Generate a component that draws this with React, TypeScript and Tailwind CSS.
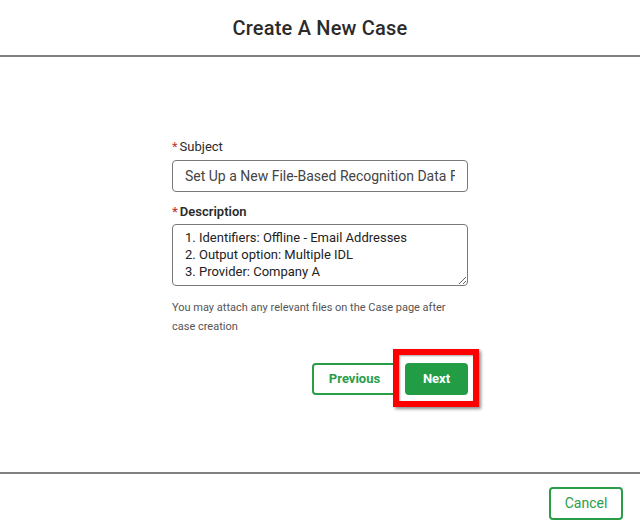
export default function App() {
  return (
    <div className="w-[640px] h-[532px] bg-white flex flex-col font-['Roboto',sans-serif] text-[#2b2b2b]">
      {/* Header */}
      <div className="h-[57px] flex items-center justify-center border-b-2 border-[#808080]">
        <h1 className="text-[20px] font-medium tracking-[0.2px]">Create A New Case</h1>
      </div>

      {/* Body */}
      <div className="flex-1 flex justify-center pt-[82px]">
        <div className="w-[296px] flex flex-col">
          <label className="text-[13px] leading-[16px] mb-[5px] flex">
            <span className="text-[#c23934] mr-[2px]">*</span>Subject
          </label>
          <input
            readOnly
            value="Set Up a New File-Based Recognition Data Feed"
            className="h-[32px] border border-[#7a7a7a] rounded-[4px] px-[12px] text-[14px] text-[#444] outline-none"
          />
          <label className="text-[13px] leading-[16px] font-semibold mt-[12px] mb-[4px] flex">
            <span className="text-[#c23934] mr-[2px]">*</span>Description
          </label>
          <textarea
            readOnly
            value={"1. Identifiers: Offline - Email Addresses\n2. Output option: Multiple IDL\n3. Provider: Company A"}
            className="h-[62px] border border-[#7a7a7a] rounded-[4px] px-[12px] pt-[4px] text-[13px] leading-[17px] text-[#222] outline-none resize-y"
          />
          <p className="mt-[12px] text-[11px] leading-[19px] text-[#555]">
            You may attach any relevant files on the Case page after case creation
          </p>
          <div className="mt-[27px] flex justify-end gap-[8px]">
            <button className="w-[85px] h-[32px] border-2 border-[#2a9d48] rounded-[4px] text-[#2a9d48] text-[13px] font-bold">
              Previous
            </button>
            <div className="relative">
              <button className="w-[63px] h-[32px] bg-[#229c45] rounded-[4px] text-white text-[13px] font-bold">
                Next
              </button>
              <div className="absolute left-[-12px] top-[-14px] right-[-11px] bottom-[-12px] border-[6px] border-[#ff0000] shadow-[2px_2px_3px_rgba(0,0,0,0.45),inset_1px_1px_2px_rgba(0,0,0,0.35)] pointer-events-none" />
            </div>
          </div>
        </div>
      </div>

      {/* Footer */}
      <div className="h-[60px] border-t-2 border-[#808080] flex items-center justify-end pr-[17px]">
        <button className="w-[74px] h-[33px] border-2 border-[#2a9d48] rounded-[4px] text-[#2a9d48] text-[14px]">
          Cancel
        </button>
      </div>
    </div>
  );
}
